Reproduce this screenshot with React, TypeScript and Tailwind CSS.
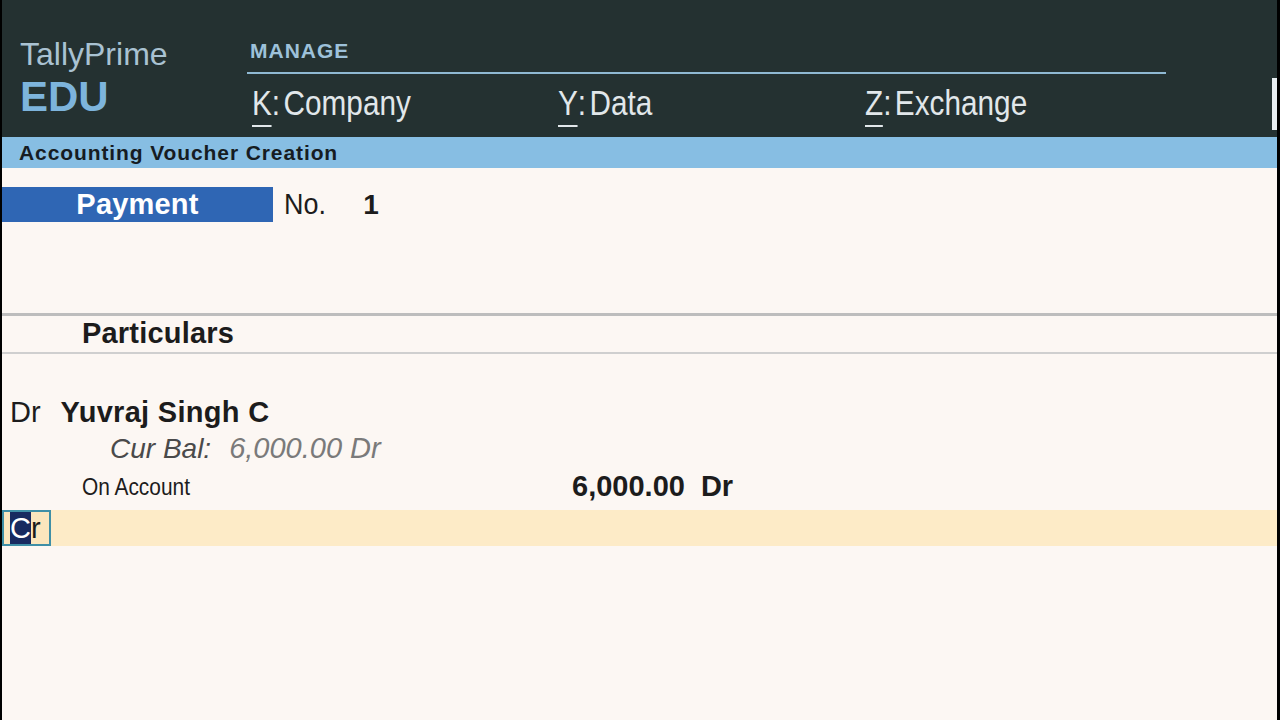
import React from "react";

const SANS = "font-['Liberation_Sans',Arial,sans-serif]";

function MenuItem({ k, label }: { k: string; label: string }) {
  return (
    <div className="pl-[5px] pt-[11px] text-[35px] leading-[35px] text-[#e1e7ea]">
      <span className="inline-block origin-left scale-x-[0.85] whitespace-nowrap">
        <span className="relative inline-block">
          {k}
          <span className="absolute left-0 top-[40px] h-[2px] w-full bg-[#e1e7ea]" />
        </span>
        <span>:</span>
        <span className="ml-[4px]">{label}</span>
      </span>
    </div>
  );
}

export default function App() {
  return (
    <div className={`w-[1280px] h-[720px] overflow-hidden bg-black pl-[2px] pr-[3px] flex flex-col ${SANS}`}>
      {/* Header */}
      <div className="relative h-[137px] bg-[#243131] flex">
        <div className="w-[245px] pl-[18px] pt-[38px]">
          <div className="text-[32px] leading-[32px] text-[#a9c2d2]">TallyPrime</div>
          <div className="mt-[6px] text-[42px] leading-[42px] font-bold text-[#7db4dc]">EDU</div>
        </div>
        <div className="w-[919px] pt-[40px]">
          <div className="pl-[3px] text-[21px] leading-[21px] font-bold tracking-[1px] text-[#9dc1da]">MANAGE</div>
          <div className="mt-[11px] h-[2px] bg-[#8fb9d3]" />
          <div className="grid grid-cols-3">
            <MenuItem k="K" label="Company" />
            <MenuItem k="Y" label="Data" />
            <MenuItem k="Z" label="Exchange" />
          </div>
        </div>
        <div className="absolute right-0 top-[78px] h-[52px] w-[5px] bg-[#e7eef1]" />
      </div>

      {/* Title bar */}
      <div className="h-[31px] bg-[#87bee3] pl-[17px] flex items-center">
        <span className="text-[21px] font-bold tracking-[0.9px] text-[#161c22]">Accounting Voucher Creation</span>
      </div>

      {/* Content */}
      <div className="flex-1 bg-[#fcf7f3] flex flex-col">
        <div className="mt-[19px] flex items-center h-[35px]">
          <div className="w-[271px] h-[35px] bg-[#2f66b4] flex items-center justify-center">
            <span className="text-[29px] font-bold tracking-[0.2px] text-white">Payment</span>
          </div>
          <span className="ml-[11px] inline-block origin-left scale-x-[0.93] text-[29px] text-[#1c1c1c]">No.</span>
          <span className="ml-[34px] text-[28px] font-bold text-[#1c1c1c]">1</span>
        </div>

        <div className="mt-[91px] h-[3px] bg-[#bdbdbd]" />
        <div className="h-[36px] flex items-center pl-[80px]">
          <span className="text-[29px] font-bold tracking-[0.2px] text-[#1c1c1c]">Particulars</span>
        </div>
        <div className="h-[2px] bg-[#cfcfcf]" />

        <div className="mt-[42px] flex items-center h-[34px]">
          <span className="ml-[8px] text-[29px] text-[#1c1c1c]">Dr</span>
          <span className="ml-[20px] text-[29px] font-bold tracking-[0.3px] text-[#1c1c1c]">Yuvraj Singh C</span>
        </div>
        <div className="flex items-center h-[38px] italic">
          <span className="ml-[108px] text-[28px] text-[#4a4a4a]">Cur Bal:</span>
          <span className="ml-[18px] text-[29px] text-[#7a7a7a]">6,000.00 Dr</span>
        </div>
        <div className="flex items-center h-[38px]">
          <span className="ml-[80px] w-[490px]">
            <span className="inline-block origin-left scale-x-[0.87] text-[24px] text-[#1c1c1c]">On Account</span>
          </span>
          <span className="text-[29px] font-bold text-[#1c1c1c]">6,000.00</span>
          <span className="ml-[16px] text-[29px] font-bold text-[#1c1c1c]">Dr</span>
        </div>
        <div className="mt-[4px] h-[36px] bg-[#fdebc7] flex">
          <div className="w-[49px] h-[36px] border-[2px] border-[#3f8fa6] bg-[#fbe6bd] flex items-center pl-[6px]">
            <span className="text-[29px] leading-[30px] text-[#1c1c1c]">
              <span className="bg-[#182a60] text-white">C</span>r
            </span>
          </div>
        </div>
      </div>
    </div>
  );
}
